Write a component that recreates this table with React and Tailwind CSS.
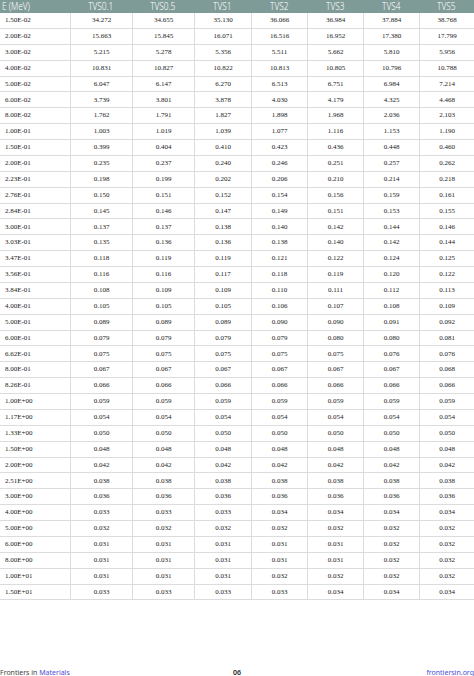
import React from 'react';

const headers = ['E (MeV)', 'TVS0.1', 'TVS0.5', 'TVS1', 'TVS2', 'TVS3', 'TVS4', 'TVS5'];

const rows = [
  ['1.50E-02', '34.272', '34.655', '35.130', '36.066', '36.984', '37.884', '38.768'],
  ['2.00E-02', '15.663', '15.845', '16.071', '16.516', '16.952', '17.380', '17.799'],
  ['3.00E-02', '5.215', '5.278', '5.356', '5.511', '5.662', '5.810', '5.956'],
  ['4.00E-02', '10.831', '10.827', '10.822', '10.813', '10.805', '10.796', '10.788'],
  ['5.00E-02', '6.047', '6.147', '6.270', '6.513', '6.751', '6.984', '7.214'],
  ['6.00E-02', '3.739', '3.801', '3.878', '4.030', '4.179', '4.325', '4.468'],
  ['8.00E-02', '1.762', '1.791', '1.827', '1.898', '1.968', '2.036', '2.103'],
  ['1.00E-01', '1.003', '1.019', '1.039', '1.077', '1.116', '1.153', '1.190'],
  ['1.50E-01', '0.399', '0.404', '0.410', '0.423', '0.436', '0.448', '0.460'],
  ['2.00E-01', '0.235', '0.237', '0.240', '0.246', '0.251', '0.257', '0.262'],
  ['2.23E-01', '0.198', '0.199', '0.202', '0.206', '0.210', '0.214', '0.218'],
  ['2.76E-01', '0.150', '0.151', '0.152', '0.154', '0.156', '0.159', '0.161'],
  ['2.84E-01', '0.145', '0.146', '0.147', '0.149', '0.151', '0.153', '0.155'],
  ['3.00E-01', '0.137', '0.137', '0.138', '0.140', '0.142', '0.144', '0.146'],
  ['3.03E-01', '0.135', '0.136', '0.136', '0.138', '0.140', '0.142', '0.144'],
  ['3.47E-01', '0.118', '0.119', '0.119', '0.121', '0.122', '0.124', '0.125'],
  ['3.56E-01', '0.116', '0.116', '0.117', '0.118', '0.119', '0.120', '0.122'],
  ['3.84E-01', '0.108', '0.109', '0.109', '0.110', '0.111', '0.112', '0.113'],
  ['4.00E-01', '0.105', '0.105', '0.105', '0.106', '0.107', '0.108', '0.109'],
  ['5.00E-01', '0.089', '0.089', '0.089', '0.090', '0.090', '0.091', '0.092'],
  ['6.00E-01', '0.079', '0.079', '0.079', '0.079', '0.080', '0.080', '0.081'],
  ['6.62E-01', '0.075', '0.075', '0.075', '0.075', '0.075', '0.076', '0.076'],
  ['8.00E-01', '0.067', '0.067', '0.067', '0.067', '0.067', '0.067', '0.068'],
  ['8.26E-01', '0.066', '0.066', '0.066', '0.066', '0.066', '0.066', '0.066'],
  ['1.00E+00', '0.059', '0.059', '0.059', '0.059', '0.059', '0.059', '0.059'],
  ['1.17E+00', '0.054', '0.054', '0.054', '0.054', '0.054', '0.054', '0.054'],
  ['1.33E+00', '0.050', '0.050', '0.050', '0.050', '0.050', '0.050', '0.050'],
  ['1.50E+00', '0.048', '0.048', '0.048', '0.048', '0.048', '0.048', '0.048'],
  ['2.00E+00', '0.042', '0.042', '0.042', '0.042', '0.042', '0.042', '0.042'],
  ['2.51E+00', '0.038', '0.038', '0.038', '0.038', '0.038', '0.038', '0.038'],
  ['3.00E+00', '0.036', '0.036', '0.036', '0.036', '0.036', '0.036', '0.036'],
  ['4.00E+00', '0.033', '0.033', '0.033', '0.034', '0.034', '0.034', '0.034'],
  ['5.00E+00', '0.032', '0.032', '0.032', '0.032', '0.032', '0.032', '0.032'],
  ['6.00E+00', '0.031', '0.031', '0.031', '0.031', '0.031', '0.032', '0.032'],
  ['8.00E+00', '0.031', '0.031', '0.031', '0.031', '0.031', '0.032', '0.032'],
  ['1.00E+01', '0.031', '0.031', '0.031', '0.032', '0.032', '0.032', '0.032'],
  ['1.50E+01', '0.033', '0.033', '0.033', '0.033', '0.034', '0.034', '0.034'],
];

// column widths measured off the page
const gridCols = 'grid grid-cols-[70px_62px_62px_57px_56px_56px_56px_55px]';

export default function App() {
  return (
    <div className="w-[474px] h-[676px] overflow-hidden bg-white">
      {/* header — top of the labels sits at the page edge */}
      <div className={`${gridCols} h-[13px] bg-[#7f9b97] overflow-hidden font-['Noto_Sans','Open_Sans',sans-serif]`}>
        {headers.map((h, i) => (
          <div
            key={h}
            className={`flex items-end pb-[2px] ${i === 0 ? 'justify-start pl-[2px]' : 'justify-center'}`}
          >
            <span
              className={`block text-white text-[11px] leading-[11px] font-light whitespace-nowrap scale-x-[0.75] ${i === 0 ? 'origin-left' : 'origin-center'}`}
            >
              {h}
            </span>
          </div>
        ))}
      </div>

      {/* body rows */}
      <div className="font-['Liberation_Serif','Times_New_Roman',serif]">
        {rows.map((r) => (
          <div key={r[0]} className={`${gridCols} h-[15.88px] border-b border-[#dcdcdc]`}>
            {r.map((v, i) => (
              <div
                key={i}
                className={`flex items-center text-[7px] text-[#222] ${
                  i === 0 ? 'pl-[5px]' : 'justify-center border-l border-[#dcdcdc]'
                }`}
              >
                {v}
              </div>
            ))}
          </div>
        ))}
      </div>

      {/* page footer */}
      <div className="relative mt-[69px] flex items-start justify-between text-[7px] leading-[8px] font-['Noto_Sans','Open_Sans',sans-serif]">
        <span className="text-[#444]">
          Frontiers in <span className="text-[#4b4fd8]">Materials</span>
        </span>
        <span className="absolute left-[233px] top-0 text-[#222] font-semibold">06</span>
        <span className="text-[#4b4fd8]">frontiersin.org</span>
      </div>
    </div>
  );
}
